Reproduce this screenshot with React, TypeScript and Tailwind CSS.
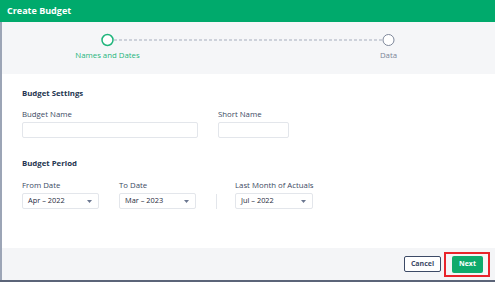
import React from "react";

function Select({ value, w }: { value: string; w: string }) {
  return (
    <div className={`${w} h-[16px] border border-[#e3e6eb] rounded-[2px] bg-white flex items-center justify-between pl-[5px] pr-[6px] text-[7.4px] text-[#1f2a3d]`}>
      <span>{value}</span>
      <svg width="5" height="3" viewBox="0 0 5 3"><path d="M0 0 L5 0 L2.5 3 Z" fill="#6b7790" /></svg>
    </div>
  );
}

export default function App() {
  return (
    <div className="w-[495px] h-[282px] flex flex-col bg-white overflow-hidden" style={{ fontFamily: '"Open Sans", sans-serif' }}>
      <div className="h-[22px] bg-[#00aa6c] flex items-center pl-[7px] text-white font-bold text-[9px] shrink-0">Create Budget</div>
      <div className="flex flex-1 min-h-0">
        <div className="w-[2px] bg-[#9ca5b6] shrink-0" />
        <div className="flex-1 flex flex-col">
          <div className="h-[52px] bg-[#f5f6f8] relative shrink-0">
            <svg className="absolute left-0 top-0" width="493" height="52">
              <line x1="112" y1="18" x2="381" y2="18" stroke="#a5adbd" strokeWidth="1" strokeDasharray="3 2" />
              <circle cx="105.5" cy="18" r="5.5" fill="white" stroke="#1fb57c" strokeWidth="1.5" />
              <circle cx="386.5" cy="18" r="5.5" fill="white" stroke="#7d879a" strokeWidth="1" />
            </svg>
            <div className="absolute left-[55px] w-[101px] top-[28px] text-center text-[7.8px] text-[#1fb57c]">Names and Dates</div>
            <div className="absolute left-[356px] w-[61px] top-[28px] text-center text-[7.8px] text-[#7a8497]">Data</div>
          </div>
          <div className="flex-1 bg-white pl-[20px] pt-[13px]">
            <div className="text-[7.8px] font-bold text-[#243550] leading-[12px]">Budget Settings</div>
            <div className="flex gap-[20px] mt-[9px]">
              <div className="flex flex-col">
                <div className="text-[7.8px] text-[#3b4a63] leading-[12px]">Budget Name</div>
                <div className="w-[176px] h-[16px] mt-[2px] border border-[#e3e6eb] rounded-[2px]" />
              </div>
              <div className="flex flex-col">
                <div className="text-[7.8px] text-[#3b4a63] leading-[12px]">Short Name</div>
                <div className="w-[71px] h-[16px] mt-[2px] border border-[#e3e6eb] rounded-[2px]" />
              </div>
            </div>
            <div className="text-[7.8px] font-bold text-[#243550] leading-[12px] mt-[19px]">Budget Period</div>
            <div className="flex items-end mt-[10px]">
              <div className="flex flex-col">
                <div className="text-[7.8px] text-[#3b4a63] leading-[12px]">From Date</div>
                <div className="mt-[2px]"><Select value="Apr – 2022" w="w-[77px]" /></div>
              </div>
              <div className="flex flex-col ml-[20px]">
                <div className="text-[7.8px] text-[#3b4a63] leading-[12px]">To Date</div>
                <div className="mt-[2px]"><Select value="Mar – 2023" w="w-[77px]" /></div>
              </div>
              <div className="w-[1px] h-[15px] bg-[#e3e6eb] ml-[20px]" />
              <div className="flex flex-col ml-[18px]">
                <div className="text-[7.8px] text-[#3b4a63] leading-[12px]">Last Month of Actuals</div>
                <div className="mt-[2px]"><Select value="Jul – 2022" w="w-[78px]" /></div>
              </div>
            </div>
          </div>
          <div className="h-[32px] bg-[#f4f5f7] flex items-center justify-end shrink-0 pr-[5px]">
            <button className="h-[16px] w-[37px] border border-[#3c4a66] rounded-[2px] bg-white text-[7px] font-bold text-[#3c4a66] flex items-center justify-center">Cancel</button>
            <div className="ml-[3px] border-2 border-[#e8232a] py-[2px] pl-[6px] pr-[5px]">
              <button className="h-[17px] w-[31px] rounded-[2px] bg-[#0faa6c] text-[7px] font-bold text-white flex items-center justify-center">Next</button>
            </div>
          </div>
        </div>
      </div>
      <div className="h-[2px] bg-[#5b6478] shrink-0" />
    </div>
  );
}
